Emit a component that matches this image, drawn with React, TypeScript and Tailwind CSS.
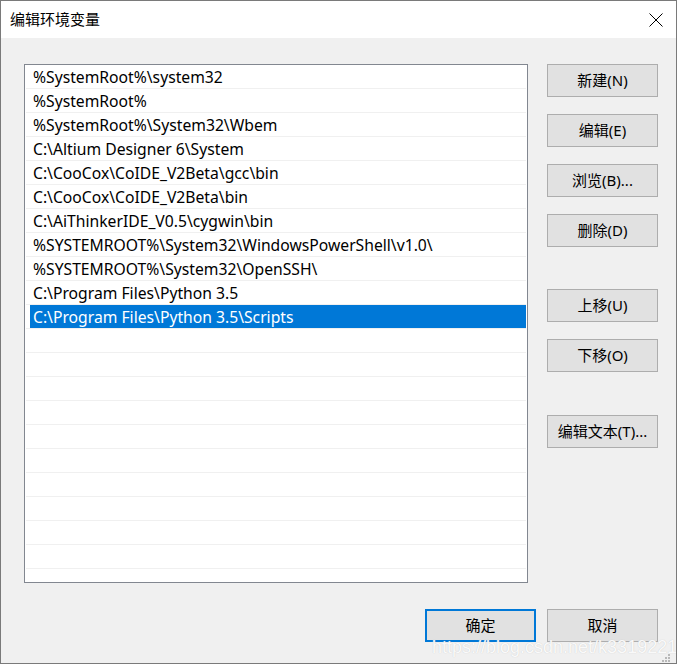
const paths = [
  '%SystemRoot%\\system32',
  '%SystemRoot%',
  '%SystemRoot%\\System32\\Wbem',
  'C:\\Altium Designer 6\\System',
  'C:\\CooCox\\CoIDE_V2Beta\\gcc\\bin',
  'C:\\CooCox\\CoIDE_V2Beta\\bin',
  'C:\\AiThinkerIDE_V0.5\\cygwin\\bin',
  '%SYSTEMROOT%\\System32\\WindowsPowerShell\\v1.0\\',
  '%SYSTEMROOT%\\System32\\OpenSSH\\',
  'C:\\Program Files\\Python 3.5',
  'C:\\Program Files\\Python 3.5\\Scripts',
];

const selected = 10;
const totalRows = 21;

function Button({ label, primary }: { label: string; primary?: boolean }) {
  return (
    <button
      className={
        'w-[111px] h-[33px] bg-[#e1e1e1] text-[15px] text-black flex items-center justify-center ' +
        (primary ? 'border-2 border-[#0078d7]' : 'border border-[#adadad]')
      }
    >
      {label}
    </button>
  );
}

export default function App() {
  const rows = Array.from({ length: totalRows }, (_, i) => paths[i] ?? '');

  return (
    <div
      className="relative w-[677px] h-[664px] border border-[#7a7a7a] bg-[#f0f0f0] flex flex-col overflow-hidden"
      style={{ fontFamily: '"Noto Sans", "Noto Sans CJK SC", sans-serif' }}
    >
      {/* Title bar */}
      <div className="h-[37px] bg-white flex items-center justify-between pl-[9px] pr-[13px] shrink-0">
        <span className="text-[15px] text-black" style={{ fontFamily: '"Noto Sans CJK SC", sans-serif' }}>
          编辑环境变量
        </span>
        <svg width="14" height="14" viewBox="0 0 14 14" className="mt-[1px]">
          <path d="M0.5 0.5 L13.5 13.5 M13.5 0.5 L0.5 13.5" stroke="#000" strokeWidth="1" fill="none" />
        </svg>
      </div>

      {/* Body */}
      <div className="flex-1 flex flex-col pl-[23px] pr-[18px] pt-[26px]">
        <div className="flex gap-[19px]">
          {/* List */}
          <div className="w-[504px] h-[519px] bg-white border border-[#828790] overflow-hidden">
            {rows.map((p, i) => (
              <div key={i} className="h-[24px] mx-[1px] border-b border-[#f0f0f0] pl-[4px]">
                <div
                  className={
                    'h-full pl-[3px] pt-[2px] flex items-center text-[15.7px] whitespace-nowrap ' +
                    (i === selected ? 'bg-[#0078d7] text-white' : 'text-black')
                  }
                >
                  {p}
                </div>
              </div>
            ))}
          </div>

          {/* Side buttons */}
          <div className="flex flex-col">
            <div className="flex flex-col gap-[17px]">
              <Button label="新建(N)" />
              <Button label="编辑(E)" />
              <Button label="浏览(B)..." />
              <Button label="删除(D)" />
            </div>
            <div className="flex flex-col gap-[17px] mt-[42px]">
              <Button label="上移(U)" />
              <Button label="下移(O)" />
            </div>
            <div className="mt-[43px]">
              <Button label="编辑文本(T)..." />
            </div>
          </div>
        </div>

        {/* Bottom buttons */}
        <div className="flex justify-end gap-[11px] mt-[26px]">
          <Button label="确定" primary />
          <Button label="取消" />
        </div>
      </div>

      {/* Watermark */}
      <div
        className="absolute left-[431px] top-[636px] text-[18px] leading-[20px] text-white/90 [text-shadow:0_0_1px_#c0c0c0] whitespace-nowrap"
        style={{ fontFamily: '"Liberation Sans", Arial, sans-serif' }}
      >
        https://blog.csdn.net/k331922164
      </div>

      {/* Resize grip */}
      <svg className="absolute right-[6px] bottom-[1px]" width="8" height="8" viewBox="0 0 8 8">
        <rect x="6" y="0" width="2" height="2" fill="#b8b8b8" />
        <rect x="3" y="3" width="2" height="2" fill="#b8b8b8" />
        <rect x="6" y="3" width="2" height="2" fill="#b8b8b8" />
        <rect x="0" y="6" width="2" height="2" fill="#b8b8b8" />
        <rect x="3" y="6" width="2" height="2" fill="#b8b8b8" />
        <rect x="6" y="6" width="2" height="2" fill="#b8b8b8" />
      </svg>
    </div>
  );
}
